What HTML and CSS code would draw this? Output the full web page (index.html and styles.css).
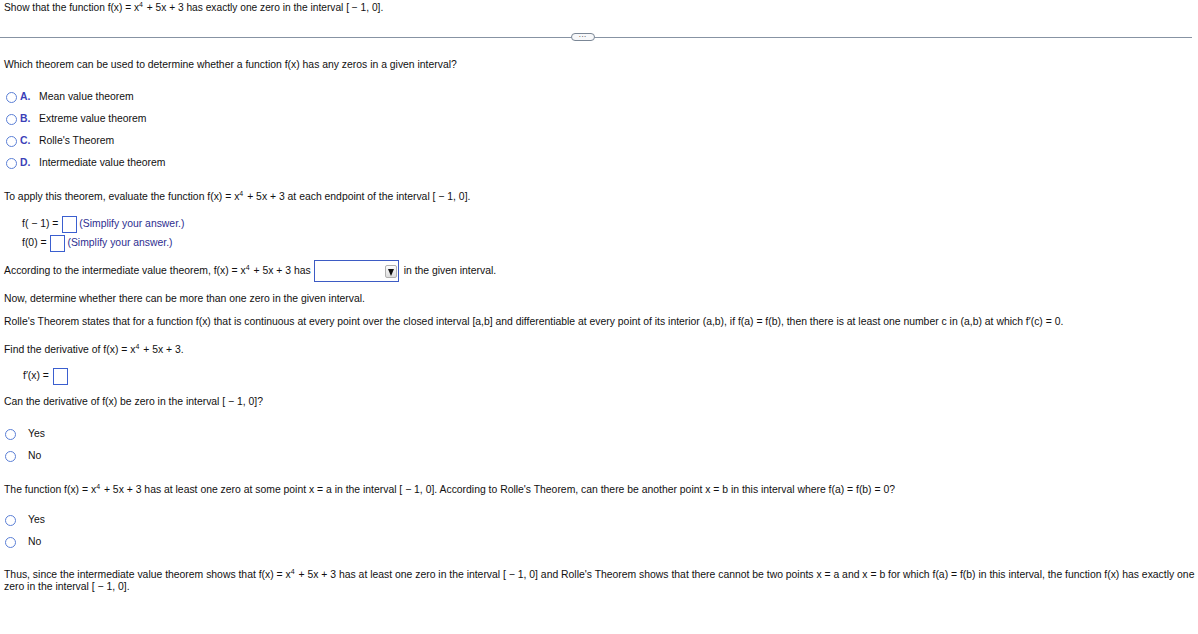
FILE: index.html
```html
<!DOCTYPE html>
<html lang="en">
<head>
<meta charset="UTF-8">
<title>Zero in interval</title>
<link rel="stylesheet" href="styles.css">
</head>
<body>

<p class="q-title">Show that the function f(x) = x<sup>4</sup> + 5x + 3 has exactly one zero in the interval [ − 1, 0].</p>

<div class="divider"><span class="pill">···</span></div>

<p class="prompt">Which theorem can be used to determine whether a function f(x) has any zeros in a given interval?</p>

<ul class="choices">
<li><span class="radio"></span><b>A.</b><span>Mean value theorem</span></li>
<li><span class="radio"></span><b>B.</b><span>Extreme value theorem</span></li>
<li><span class="radio"></span><b>C.</b><span>Rolle's Theorem</span></li>
<li><span class="radio"></span><b>D.</b><span>Intermediate value theorem</span></li>
</ul>

<p class="step s-apply">To apply this theorem, evaluate the function f(x) = x<sup>4</sup> + 5x + 3 at each endpoint of the interval [ − 1, 0].</p>

<div class="answer a-first"><span>f( − 1) = </span><span class="box"></span><span class="hint">(Simplify your answer.)</span></div>
<div class="answer a-second"><span>f(0) = </span><span class="box"></span><span class="hint">(Simplify your answer.)</span></div>

<div class="select-row"><span>According to the intermediate value theorem, f(x) = x<sup>4</sup> + 5x + 3 has</span><span class="dropdown"><span class="arrow"></span></span><span>in the given interval.</span></div>

<p class="step s-now">Now, determine whether there can be more than one zero in the given interval.</p>
<p class="step s-rolle">Rolle's Theorem states that for a function f(x) that is continuous at every point over the closed interval [a,b] and differentiable at every point of its interior (a,b), if f(a) = f(b), then there is at least one number c in (a,b) at which f′(c) = 0.</p>
<p class="step s-find">Find the derivative of f(x) = x<sup>4</sup> + 5x + 3.</p>

<div class="answer a-deriv"><span>f′(x) = </span><span class="box"></span></div>

<p class="step s-can">Can the derivative of f(x) be zero in the interval [ − 1, 0]?</p>

<ul class="yesno yn-first">
<li><span class="radio"></span><span>Yes</span></li>
<li><span class="radio"></span><span>No</span></li>
</ul>

<p class="step s-func">The function f(x) = x<sup>4</sup> + 5x + 3 has at least one zero at some point x = a in the interval [ − 1, 0]. According to Rolle's Theorem, can there be another point x = b in this interval where f(a) = f(b) = 0?</p>

<ul class="yesno yn-second">
<li><span class="radio"></span><span>Yes</span></li>
<li><span class="radio"></span><span>No</span></li>
</ul>

<p class="step s-thus">Thus, since the intermediate value theorem shows that f(x) = x<sup>4</sup> + 5x + 3 has at least one zero in the interval [ − 1, 0] and Rolle's Theorem shows that there cannot be two points x = a and x = b for which f(a) = f(b) in this interval, the function f(x) has exactly one zero in the interval [ − 1, 0].</p>

</body>
</html>
```

FILE: styles.css
```css
body{
margin:0;
padding:2px 2px 0 4px;
font-family:"Liberation Sans", Arial, sans-serif;
font-size:10.4px;
line-height:12px;
color:#111;
background:white;
}

p{
margin:0;
}

.q-title{
font-size:10.2px;
}

sup{
font-size:7px;
line-height:0;
vertical-align:4px;
margin-right:1px;
}

/* Divider */
.divider{
margin:18px -2px 0 -4px;
width:1192px;
height:10px;
display:flex;
align-items:center;
justify-content:center;
background:linear-gradient(#8793a3,#8793a3) left center/100% 1px no-repeat;
}

.pill{
display:block;
margin-left:-27px;
width:22px;
height:6px;
border:1.5px solid #7b8796;
border-radius:5px;
background:#f7f8fa;
color:#333;
font-size:8px;
line-height:5px;
text-align:center;
}

.prompt{
margin-top:17px;
}

/* Choices */
.choices,
.yesno{
list-style:none;
margin:0;
padding:0;
}

.choices{
margin-top:15px;
}

.choices li,
.yesno li{
height:22px;
display:flex;
align-items:center;
}

.radio{
display:inline-block;
box-sizing:border-box;
width:11px;
height:11px;
border:1.3px solid #5b7fd6;
border-radius:50%;
background:white;
}

.choices .radio{
margin-left:2px;
}

.choices b{
color:#3c3fb8;
margin-left:3px;
width:19px;
}

.yesno .radio{
margin-left:1px;
margin-right:12px;
}

/* Steps */
.s-apply{margin-top:17px;}
.s-now{margin-top:11px;}
.s-rolle{margin-top:11px;}
.s-find{margin-top:16px;}
.s-can{margin-top:11px;}
.s-func{margin-top:17px;}
.s-thus{margin-top:16px;}

.yn-first{margin-top:15px;}
.yn-second{margin-top:13px;}

/* Answer boxes */
.answer{
height:18px;
display:flex;
align-items:center;
padding-left:18px;
white-space:pre;
}

.a-first{margin-top:12px;}
.a-second{margin-top:1px;}
.a-deriv{margin-top:11px;padding-left:19px;}

.box{
display:inline-block;
box-sizing:border-box;
width:15px;
height:17px;
border:1px solid #3b5fcf;
margin-left:1px;
background:white;
}

.hint{
color:#2e2e90;
margin-left:2px;
}

.select-row{
margin-top:8px;
height:22px;
display:flex;
align-items:center;
white-space:pre;
}

.dropdown{
box-sizing:border-box;
width:85px;
height:22px;
border:1px solid #3d5bc4;
display:flex;
align-items:center;
justify-content:flex-end;
padding-right:1px;
margin:0 5px 0 3px;
}

.arrow{
box-sizing:border-box;
width:12px;
height:13px;
border:1px solid #b0b0b0;
border-radius:2px;
background:linear-gradient(#fdfdfd,#dcdcdc);
position:relative;
}

.arrow::after{
content:"";
position:absolute;
left:2px;
top:3px;
border-left:3.5px solid transparent;
border-right:3.5px solid transparent;
border-top:7px solid #111;
}
```
